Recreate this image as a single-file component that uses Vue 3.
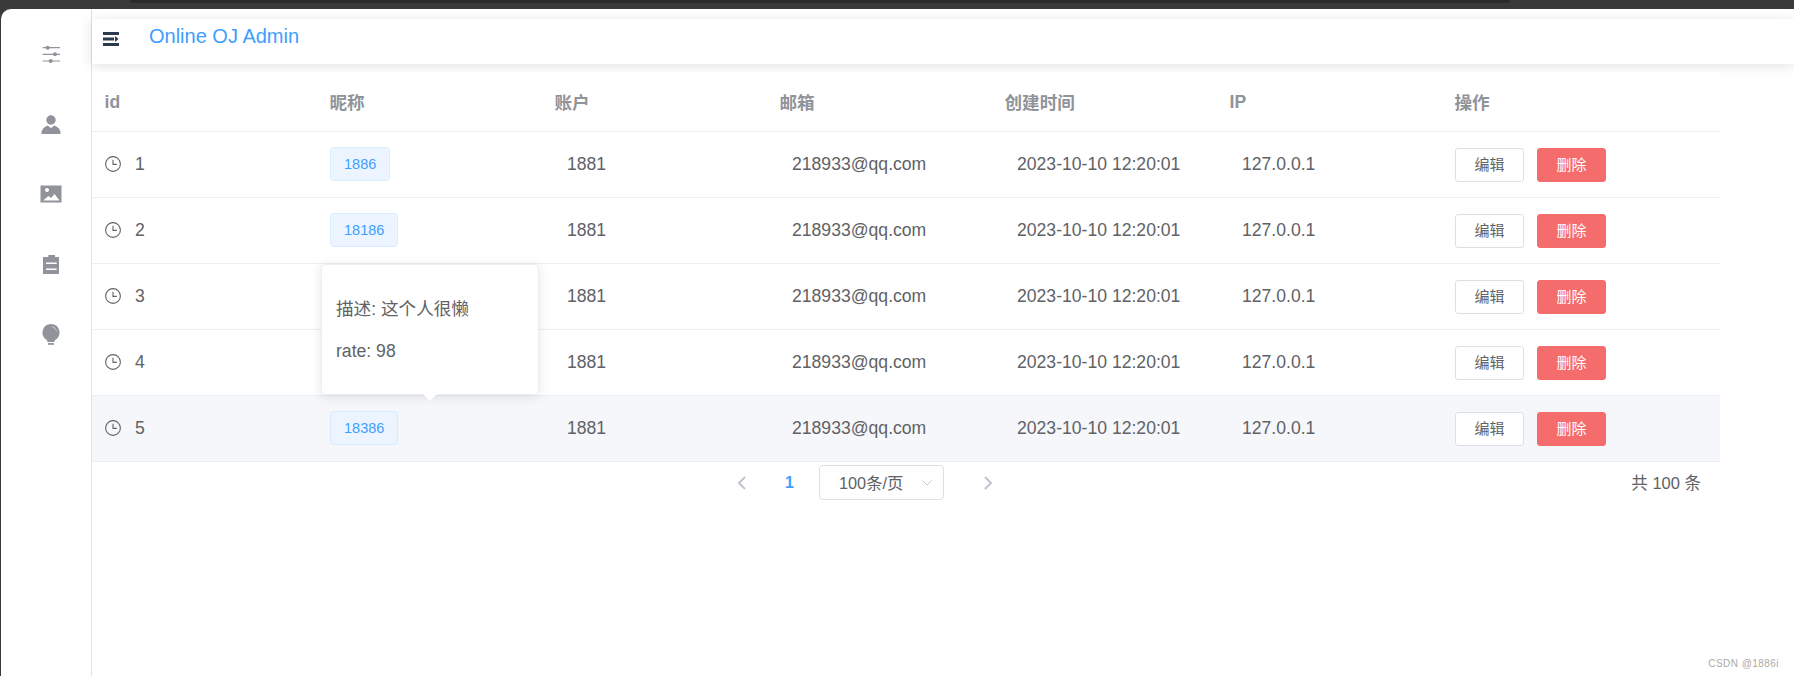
<script setup>
const rows = [
  { id: 1, name: '1886' },
  { id: 2, name: '18186' },
  { id: 3, name: '18286' },
  { id: 4, name: '18286' },
  { id: 5, name: '18386' }
]
</script>

<template>
  <div class="shell">
    <div class="topbar"><div class="topbar-notch"></div></div>
    <div class="window">
      <aside class="side">
        <svg class="nav" viewBox="0 0 24 24"><path d="M3.700 5.100h17.300v1.200H3.700zM3.700 11.700h17.300v1.200H3.700zM3.700 18.400h17.300v1.200H3.700z"/><circle cx="8.700" cy="5.700" r="2"/><circle cx="16" cy="12.300" r="2"/><circle cx="11.700" cy="19" r="2"/></svg>
        <svg class="nav" viewBox="0 0 24 24"><circle cx="12" cy="8" r="4.700"/><path d="M2.500 22v-2c.5-3 2.500-5 6-6.500l3.500 2.500 3.500-2.500c3.500 1.500 5.500 3.500 6 6.500v2z"/></svg>
        <svg class="nav" viewBox="0 0 24 24"><path fill-rule="evenodd" d="M1.500 3.500h21v17h-21zM8 6a2 2 0 1 0 .01 0zM4 18.500h16.500l-5-6.500-3.500 4-2.500-2z"/></svg>
        <svg class="nav" viewBox="0 0 24 24"><path fill-rule="evenodd" d="M9.300 5V3H16v2h4v17H4V5zM7 10.600h10.700v1.500H7zM7 16.600h10.700v1.500H7z"/></svg>
        <svg class="nav" viewBox="0 0 24 24"><path fill-rule="evenodd" d="M12 2a8.500 8.500 0 0 1 4.800 15.500c-1 .8-1.300 1.500-1.300 2.500h-7c0-1-.3-1.700-1.300-2.500A8.500 8.500 0 0 1 12 2zM12 4.300a6.500 6.500 0 0 1 6 6c-1-3-3-5-6-6z"/><path d="M9 21h6v1.800H9z"/></svg>
      </aside>
      <main class="main">
        <header class="head">
          <svg class="burger" viewBox="0 0 16 14"><path d="M0 0h16v3H0zM0 5.500h11v3H0zM0 11h16v3H0zM12 4 15.500 7 12 10z"/></svg>
          <span class="brand">Online OJ Admin</span>
        </header>
        <section class="table">
          <div class="row row-head">
            <div class="cell latin">id</div>
            <div class="cell">昵称</div>
            <div class="cell">账户</div>
            <div class="cell">邮箱</div>
            <div class="cell">创建时间</div>
            <div class="cell latin">IP</div>
            <div class="cell">操作</div>
          </div>
          <div v-for="r in rows" :key="r.id" class="row" :class="{ hover: r.id === 5 }">
            <div class="cell id-cell">
              <svg class="clock" viewBox="0 0 16 16"><circle cx="8" cy="8" r="7.400" fill="none" stroke-width="1.100"/><path d="M8 3.800V8.400h3.800" fill="none" stroke-width="1.100"/></svg>
              <span>{{ r.id }}</span>
            </div>
            <div class="cell"><span v-if="r.id !== 3 && r.id !== 4" class="tag">{{ r.name }}</span></div>
            <div class="cell text">1881</div>
            <div class="cell text">218933@qq.com</div>
            <div class="cell text">2023-10-10 12:20:01</div>
            <div class="cell text">127.0.0.1</div>
            <div class="cell actions">
              <button class="btn">编辑</button>
              <button class="btn danger">删除</button>
            </div>
          </div>
          <div class="popover">
            <p>描述: 这个人很懒</p>
            <p>rate: 98</p>
            <i class="arrow"></i>
          </div>
        </section>
        <footer class="pager">
          <svg class="chev chev-prev" viewBox="0 0 10 16"><path d="M8 2 2 8l6 6"/></svg>
          <span class="page">1</span>
          <div class="select">
            <span class="select-label">100条/页</span>
            <svg class="caret" viewBox="0 0 10 6"><path d="M.5.500 5 5 9.500.5"/></svg>
          </div>
          <svg class="chev chev-next" viewBox="0 0 10 16"><path d="M2 2l6 6-6 6"/></svg>
          <span class="total">共 100 条</span>
        </footer>
        <div class="mark">CSDN @1886i</div>
      </main>
    </div>
  </div>
</template>

<style>
html, body { margin: 0; background: #3a3a3a; }
</style>

<style scoped>
.shell {
  width: 1794px;
  height: 676px;
  overflow: hidden;
  display: flex;
  flex-direction: column;
  background: #3a3a3a;
  font-family: "Liberation Sans", "Noto Sans CJK SC", sans-serif;
  color: #606266;
  font-size: 17.6px;
}
.topbar { height: 9px; flex: none; display: flex; }
.topbar-notch {
  margin-left: 130px;
  width: 1380px;
  height: 3px;
  background: #2b2b2b;
  border-radius: 0 0 6px 6px;
}
.window {
  flex: 1;
  min-height: 0;
  margin-left: 1px;
  display: flex;
  background: #fff;
  border-top-left-radius: 10px;
  overflow: hidden;
}
.side {
  width: 91px;
  flex: none;
  box-sizing: border-box;
  border-right: 1px solid #e2e2e6;
  padding: 33px 0 0 10px;
  display: flex;
  flex-direction: column;
  align-items: center;
  gap: 46px;
}
.nav { width: 24px; height: 24px; fill: #909399; flex: none; }
.main { flex: 1; min-width: 0; padding-top: 10px; display: flex; flex-direction: column; }
.head {
  height: 45px;
  flex: none;
  display: flex;
  align-items: flex-start;
  background: #fff;
  box-shadow: 0 2px 12px rgba(0, 0, 0, .12);
  position: relative;
  z-index: 1;
  padding-left: 11px;
}
.burger { width: 16px; height: 14px; margin-top: 13px; fill: #2d3a4b; flex: none; }
.brand { margin-left: 30px; color: #409eff; font-size: 20px; line-height: 34px; }
.table { position: relative; width: 1628px; margin-top: 8px; background: #fff; z-index: 2; }
.row {
  display: grid;
  grid-template-columns: repeat(6, 225px) 1fr;
  height: 66px;
  align-items: center;
  box-sizing: border-box;
  border-bottom: 1px solid #ebeef5;
}
.row-head { height: 60px; color: #909399; font-weight: 700; }
.row-head .cell { padding-left: 12.500px; }
.row-head .latin { padding-top: 2px; }
.row.hover { background: #f5f7fa; }
.cell { padding-left: 13px; display: flex; align-items: center; }
.id-cell { gap: 14px; }
.clock { width: 16px; height: 16px; margin-bottom: 2px; stroke: #606266; flex: none; }
.text { padding-left: 25px; }
.tag {
  box-sizing: border-box;
  height: 34px;
  margin-bottom: 2px;
  padding: 0 13px;
  display: inline-flex;
  align-items: center;
  font-size: 14.500px;
  color: #409eff;
  background: #ecf5ff;
  border: 1px solid #d9ecff;
  border-radius: 4px;
}
.actions { gap: 13px; }
.btn {
  box-sizing: border-box;
  width: 69px;
  height: 34px;
  padding: 0 0 2px;
  font: inherit;
  font-size: 15px;
  color: #606266;
  background: #fff;
  border: 1px solid #dcdfe6;
  border-radius: 3px;
}
.btn.danger { color: #fff; background: #f56c6c; border-color: #f56c6c; }
.popover {
  position: absolute;
  left: 229px;
  top: 192px;
  width: 218px;
  height: 131px;
  box-sizing: border-box;
  padding: 32px 14px 0;
  background: #fff;
  border: 1px solid #ebeef5;
  border-radius: 4px;
  box-shadow: 0 2px 12px rgba(0, 0, 0, .1);
}
.popover p { margin: 0 0 18px; line-height: 24px; }
.arrow {
  position: absolute;
  left: 101px;
  bottom: -7px;
  width: 0;
  height: 0;
  border-left: 7px solid transparent;
  border-right: 7px solid transparent;
  border-top: 7px solid #fff;
}
.pager {
  position: relative;
  width: 1628px;
  height: 35px;
  margin-top: 3px;
  display: flex;
  align-items: center;
}
.chev { width: 10px; height: 16px; fill: none; stroke: #c0c4cc; stroke-width: 2; flex: none; }
.chev-prev { margin-left: 645px; }
.page { margin-left: 38px; width: 9px; color: #409eff; font-weight: 700; font-size: 16px; }
.select {
  box-sizing: border-box;
  margin-left: 25px;
  width: 125px;
  height: 35px;
  padding: 0 11px 0 19px;
  display: flex;
  align-items: center;
  justify-content: space-between;
  border: 1px solid #dcdfe6;
  border-radius: 4px;
  font-size: 16.300px;
}
.select-label { margin-bottom: 2px; }
.caret { width: 10px; height: 6px; fill: none; stroke: #c0c4cc; stroke-width: 1; }
.chev-next { margin-left: 39px; }
.total { margin-left: auto; margin-right: 19px; margin-bottom: 2px; font-size: 16.500px; }
.mark {
  position: absolute;
  right: 15px;
  bottom: 7px;
  font-size: 10px;
  letter-spacing: .45px;
  color: #aaa;
}
</style>
